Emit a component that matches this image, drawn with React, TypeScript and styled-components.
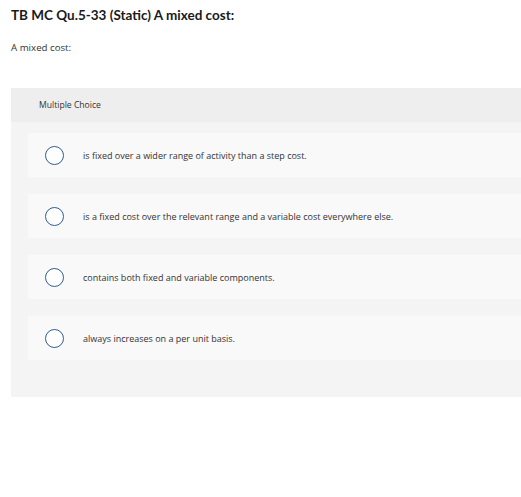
import React from "react";
import styled, { createGlobalStyle } from "styled-components";

const Global = createGlobalStyle`
  html, body { margin: 0; padding: 0; background: #ffffff; overflow: hidden; }
  body { font-family: "Open Sans", Arial, sans-serif; color: #222; }
`;

const Page = styled.div`
  display: flex;
  flex-direction: column;
  padding-top: 7px;
`;

const Title = styled.h1`
  margin: 0 0 0 11px;
  font-family: Lato, "Open Sans", Arial, sans-serif;
  font-size: 13.5px;
  line-height: 17px;
  font-weight: 700;
  color: #1a1a1a;
`;

const Prompt = styled.p`
  margin: 17px 0 0 11px;
  font-size: 9.7px;
  line-height: 14px;
  color: #333;
`;

const Panel = styled.section`
  margin: 33px 0 0 11px;
  background: #f4f4f4;
  padding-bottom: 37px;
  display: flex;
  flex-direction: column;
`;

const PanelHeader = styled.div`
  height: 34px;
  background: #eeeeee;
  display: flex;
  align-items: center;
  padding-left: 28px;
  font-size: 8.6px;
  color: #333;
`;

const Options = styled.div`
  display: flex;
  flex-direction: column;
  gap: 17px;
  padding: 11px 0 0 17px;
`;

const Option = styled.label`
  height: 44px;
  background: #f9f9f9;
  display: flex;
  align-items: center;
  padding-left: 17px;
  cursor: pointer;
`;

const Radio = styled.span`
  width: 17px;
  height: 17px;
  border: 1.5px solid #2b5d93;
  border-radius: 50%;
  background: #fff;
  flex: none;
`;

const OptionText = styled.span`
  margin-left: 19px;
  font-size: 9px;
  color: #333;
`;

const choices = [
  "is fixed over a wider range of activity than a step cost.",
  "is a fixed cost over the relevant range and a variable cost everywhere else.",
  "contains both fixed and variable components.",
  "always increases on a per unit basis.",
];

export default function App() {
  return (
    <>
      <Global />
      <Page>
        <Title>TB MC Qu.5-33 (Static) A mixed cost:</Title>
        <Prompt>A mixed cost:</Prompt>
        <Panel>
          <PanelHeader>Multiple Choice</PanelHeader>
          <Options>
            {choices.map((c) => (
              <Option key={c}>
                <Radio />
                <OptionText>{c}</OptionText>
              </Option>
            ))}
          </Options>
        </Panel>
      </Page>
    </>
  );
}
